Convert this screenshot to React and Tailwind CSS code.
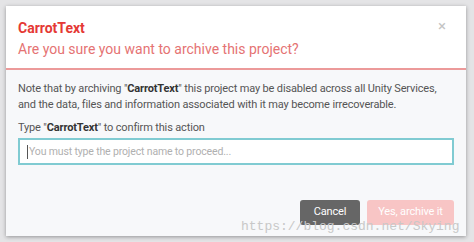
export default function App() {
  return (
    <div className="relative w-[474px] h-[242px] overflow-hidden bg-[#e4e4e6] pt-[6px] pl-[6px]" style={{ fontFamily: "Roboto, 'Noto Sans', sans-serif" }}>
      <div className="w-[460px] h-[230px] flex flex-col bg-[#f7f8fa] shadow-[0_1px_4px_rgba(0,0,0,0.35)]">
        <div className="relative bg-white px-[12px] pt-[12px] pb-[8px] border-b-2 border-[#ec9a9a]">
          <div className="text-[14px] leading-[20px] font-bold text-[#e53935]">CarrotText</div>
          <div className="text-[14px] leading-[22px] text-[#e57373]">Are you sure you want to archive this project?</div>
          <span className="absolute right-[20px] top-[13px] text-[15px] leading-none text-[#c4c4c4]">×</span>
        </div>
        <div className="flex flex-col flex-1 px-[12px] pt-[11px] text-[11px] tracking-[-0.15px] text-[#555]">
          <p className="leading-[16px]">
            Note that by archiving "<b className="text-[#333]">CarrotText</b>" this project may be disabled across all Unity Services, and the data, files and information associated with it may become irrecoverable.
          </p>
          <p className="mt-[7px] leading-[16px]">
            Type "<b className="text-[#333]">CarrotText</b>" to confirm this action
          </p>
          <div className="mt-[2px] h-[27px] border-2 border-[#80cbd2] bg-white flex items-center px-[7px] text-[10.5px] text-[#b0b0b0]">
            <span className="w-px h-[14px] bg-[#555] mr-px"></span>You must type the project name to proceed...
          </div>
          <div className="flex justify-end gap-[7px] mt-[35px]">
            <button className="w-[60px] h-[25px] rounded-[3px] bg-[#666] text-white text-[11px]">Cancel</button>
            <button className="w-[87px] h-[25px] rounded-[3px] bg-[#f8c5c5] text-white text-[11px]">Yes, archive it</button>
          </div>
        </div>
      </div>
      <span className="absolute left-[241px] top-[219px] text-[13px] leading-[16px] text-[#c8c8c8]" style={{ fontFamily: "'Liberation Mono', monospace" }}>https://blog.csdn.net/Skying</span>
    </div>
  );
}
